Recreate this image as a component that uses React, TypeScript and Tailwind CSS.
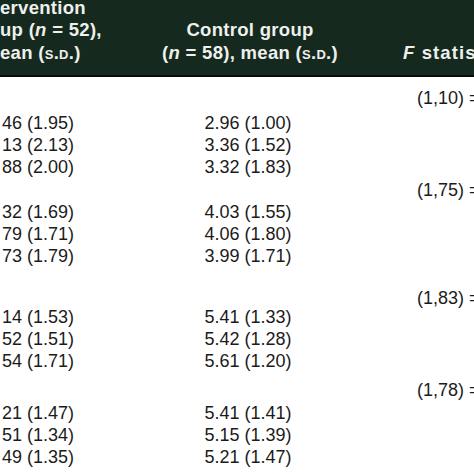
const groups = [
  {
    f: "(1,10) =",
    mt: "mt-[12px]",
    gap: "mt-[7px]",
    rows: [
      ["46 (1.95)", "2.96 (1.00)"],
      ["13 (2.13)", "3.36 (1.52)"],
      ["88 (2.00)", "3.32 (1.83)"],
    ],
  },
  {
    f: "(1,75) =",
    mt: "mt-[5px]",
    gap: "mt-[4px]",
    rows: [
      ["32 (1.69)", "4.03 (1.55)"],
      ["79 (1.71)", "4.06 (1.80)"],
      ["73 (1.79)", "3.99 (1.71)"],
    ],
  },
  {
    f: "(1,83) =",
    mt: "mt-[24px]",
    gap: "mt-[1px]",
    rows: [
      ["14 (1.53)", "5.41 (1.33)"],
      ["52 (1.51)", "5.42 (1.28)"],
      ["54 (1.71)", "5.61 (1.20)"],
    ],
  },
  {
    f: "(1,78) =",
    mt: "mt-[11px]",
    gap: "mt-[5px]",
    rows: [
      ["21 (1.47)", "5.41 (1.41)"],
      ["51 (1.34)", "5.15 (1.39)"],
      ["49 (1.35)", "5.21 (1.47)"],
    ],
  },
];

const Sd = () => <span className="[font-variant-caps:small-caps]">s.d.</span>;

export default function App() {
  return (
    <div className="w-[474px] h-[474px] overflow-hidden bg-white font-['Liberation_Sans',Arial,sans-serif]">
      {/* header band */}
      <div className="flex items-end h-[77px] pb-[11px] bg-[#15291f] text-[#eef0ec] text-[18.5px] font-bold leading-[22.5px] tracking-[0.3px] border-b-2 border-[#080a08]">
        <div className="w-[150px] shrink-0 whitespace-nowrap">
          <div>ervention</div>
          <div>
            up (<i>n</i> = 52),
          </div>
          <div>
            ean (<Sd />)
          </div>
        </div>
        <div className="w-[200px] shrink-0 text-center whitespace-nowrap">
          <div>Control group</div>
          <div>
            (<i>n</i> = 58), mean (<Sd />)
          </div>
        </div>
        <div className="pl-[53px] whitespace-nowrap tracking-[1.1px]">
          <i>F</i> statistic
        </div>
      </div>

      {/* body rows */}
      <div className="text-[18px] text-[#1b1b1b] leading-[18px]">
        {groups.map((g) => (
          <div key={g.f} className={g.mt}>
            <div className="flex h-[18px]">
              <div className="w-[336px] shrink-0" />
              <div className="pl-[81px] whitespace-nowrap">{g.f}</div>
            </div>
            <div className={`${g.gap} flex flex-col gap-[4px]`}>
              {g.rows.map(([a, b]) => (
                <div key={a + b} className="flex h-[18px]">
                  <div className="w-[160px] shrink-0 pl-[2px]">{a}</div>
                  <div className="w-[176px] shrink-0 text-center">{b}</div>
                </div>
              ))}
            </div>
          </div>
        ))}
      </div>
    </div>
  );
}
